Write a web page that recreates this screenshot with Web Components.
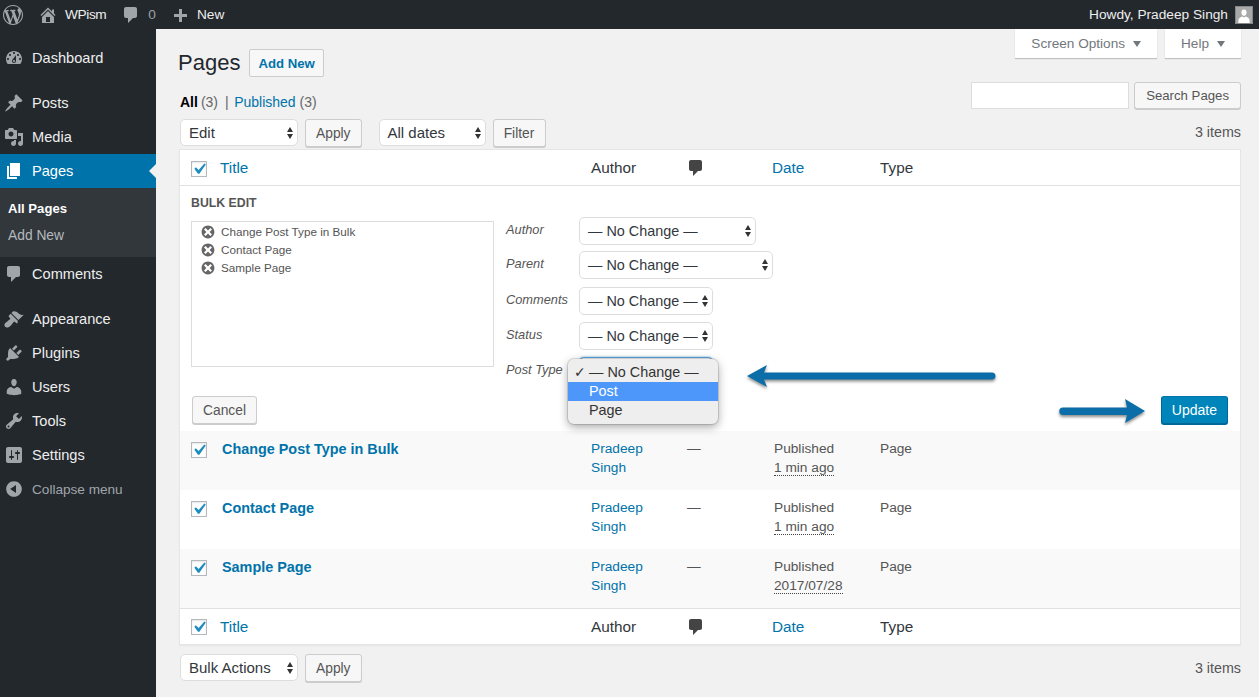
<!DOCTYPE html>
<html lang="en"><head><meta charset="utf-8"><title>Pages</title>
<style>
html,body{margin:0;padding:0;background:#f1f1f1;}
body{font-family:"Liberation Sans",Arial,sans-serif;font-size:14px;color:#444;}
</style></head><body>
<wp-app>
  <wp-adminbar slot="bar"></wp-adminbar>
  <wp-sidebar slot="side"></wp-sidebar>
  <wp-main></wp-main>
  <wp-arrow slot="over" dir="left"></wp-arrow>
  <wp-arrow slot="over" dir="right"></wp-arrow>
</wp-app>
<script>
const ICONS={
wp:'M20 10c0-5.51-4.49-10-10-10C4.48 0 0 4.49 0 10c0 5.52 4.48 10 10 10 5.51 0 10-4.48 10-10zM7.78 15.37L4.37 6.22c.55-.02 1.17-.08 1.17-.08.5-.06.44-1.13-.06-1.11 0 0-1.45.11-2.37.11-.18 0-.37 0-.58-.01C4.12 2.69 6.87 1.11 10 1.11c2.33 0 4.45.87 6.05 2.34-.68-.11-1.65.39-1.65 1.58 0 .74.45 1.36.9 2.1.35.61.55 1.36.55 2.46 0 1.49-1.4 5-1.4 5l-3.03-8.37c.54-.02.82-.17.82-.17.5-.05.44-1.25-.06-1.22 0 0-1.44.12-2.38.12-.87 0-2.33-.12-2.33-.12-.5-.03-.56 1.2-.06 1.22l.92.08 1.26 3.41zM17.41 10c.24-.64.74-1.87.43-4.25.7 1.29 1.05 2.71 1.05 4.25 0 3.29-1.73 6.24-4.4 7.78.97-2.59 1.94-5.2 2.92-7.78zM6.1 18.09C3.12 16.65 1.11 13.53 1.11 10c0-1.3.23-2.48.72-3.59C3.25 10.3 4.67 14.2 6.1 18.09zm4.03-6.63l2.58 6.98c-.86.29-1.76.45-2.71.45-.79 0-1.57-.11-2.29-.33.81-2.38 1.62-4.74 2.42-7.1z',
home:'M16 8.5l1.53 1.53-1.06 1.06L10 4.62l-6.47 6.47-1.06-1.06L10 2.5l4 4v-2h2v4zm-6-2.46l6 5.99V18H4v-5.97zM12 17v-5H8v5h4z',
comment:'M5 2h9c1.1 0 2 .9 2 2v7c0 1.1-.9 2-2 2h-2l-5 5v-5H5c-1.1 0-2-.9-2-2V4c0-1.1.9-2 2-2z',
plus:'M17 7v3h-5v5H9v-5H4V7h5V2h3v5h5z',
dashboard:'M3.76 16h12.48c1.1-1.37 1.76-3.11 1.76-5 0-4.42-3.58-8-8-8s-8 3.58-8 8c0 1.89.66 3.63 1.76 5zM10 4c.55 0 1 .45 1 1s-.45 1-1 1-1-.45-1-1 .45-1 1-1zM6 6c.55 0 1 .45 1 1s-.45 1-1 1-1-.45-1-1 .45-1 1-1zm8 0c.55 0 1 .45 1 1s-.45 1-1 1-1-.45-1-1 .45-1 1-1zm-5.37 5.55L12 7v6c0 1.1-.9 2-2 2s-2-.9-2-2c0-.57.24-1.08.63-1.45zM4 10c.55 0 1 .45 1 1s-.45 1-1 1-1-.45-1-1 .45-1 1-1zm12 0c.55 0 1 .45 1 1s-.45 1-1 1-1-.45-1-1 .45-1 1-1zm-5 3c0-.55-.45-1-1-1s-1 .45-1 1 .45 1 1 1 1-.45 1-1z',
post:'M10.44 3.02l1.82-1.82 6.36 6.35-1.83 1.82c-1.05-.68-2.48-.57-3.41.36l-.75.75c-.92.93-1.04 2.35-.35 3.41l-1.83 1.82-2.41-2.41-2.8 2.79c-.42.42-3.38 2.71-3.8 2.29s1.86-3.39 2.28-3.81l2.79-2.79L4.1 9.36l1.83-1.82c1.05.69 2.48.57 3.4-.36l.75-.75c.93-.92 1.05-2.35.36-3.41z',
media:'M13 11V4c0-.55-.45-1-1-1h-1.67L9 1H5L3.67 3H2c-.55 0-1 .45-1 1v7c0 .55.45 1 1 1h10c.55 0 1-.45 1-1zM7 4.5c1.38 0 2.5 1.12 2.5 2.5S8.38 9.5 7 9.5 4.5 8.38 4.5 7 5.62 4.5 7 4.5zM14 6h5v10.5c0 1.38-1.12 2.5-2.5 2.5S14 17.88 14 16.5s1.12-2.5 2.5-2.5c.17 0 .34.02.5.05V9h-3V6zm-4 8.05V13h2v3.5c0 1.38-1.12 2.5-2.5 2.5S7 17.88 7 16.5 8.12 14 9.5 14c.17 0 .34.02.5.05z',
pages:'M6 15V2h10v13H6zm-1 1h8v2H3V5h2v11z',
appearance:'M14.48 11.06L7.41 3.99l1.5-1.5c.5-.56 2.3-.47 3.51.32 1.21.8 1.43 1.28 2.91 2.1 1.18.64 2.45 1.26 4.45.85zm-.71.71L6.7 4.7 4.93 6.47c-.39.39-.39 1.02 0 1.41l1.06 1.06c.39.39.39 1.03 0 1.42-.6.6-1.43 1.11-2.21 1.69-.35.26-.7.53-1.01.84C1.43 13.23.4 14.85.4 16.08c0 1.23 1.28 2.52 2.52 2.52 1.23 0 2.85-1.03 4.19-2.37.31-.31.58-.66.84-1.01.58-.78 1.09-1.61 1.69-2.21.39-.39 1.03-.39 1.42 0l1.06 1.06c.39.39 1.02.39 1.41 0z',
plugins:'M13.11 4.36L9.87 7.6 8 5.73l3.24-3.24c.35-.34 1.05-.2 1.56.32.52.51.66 1.21.31 1.55zm-8 1.77l.91-1.12 9.01 9.01-1.19.84c-.71.71-2.63 1.16-3.82 1.16H6.14L4.9 17.26c-.59.59-1.54.59-2.12 0-.59-.58-.59-1.53 0-2.12l1.24-1.24v-3.88c0-1.13.4-3.19 1.09-3.89zm7.26 3.97l3.24-3.24c.34-.35 1.04-.21 1.55.31.52.51.66 1.21.31 1.55l-3.24 3.25z',
users:'M10 9.25c-2.27 0-2.73-3.44-2.73-3.44C7 4.02 7.82 2 9.97 2c2.16 0 2.98 2.02 2.71 3.81 0 0-.41 3.44-2.68 3.44zm0 2.57L12.72 10c2.39 0 4.52 2.33 4.52 4.53v2.49s-3.65 1.13-7.24 1.13c-3.65 0-7.24-1.13-7.24-1.13v-2.49c0-2.25 1.94-4.48 4.47-4.48z',
tools:'M16.68 9.77c-1.34 1.34-3.3 1.67-4.95.99l-5.41 6.52c-.99.99-2.59.99-3.58 0s-.99-2.59 0-3.57l6.52-5.42c-.68-1.65-.35-3.61.99-4.95 1.28-1.28 3.12-1.62 4.72-1.06l-2.89 2.89 2.82 2.82 2.86-2.87c.53 1.58.18 3.39-1.08 4.65zM3.81 16.21c.4.39 1.04.39 1.43 0 .4-.4.4-1.04 0-1.43-.39-.4-1.03-.4-1.43 0-.39.39-.39 1.03 0 1.43z',
settings:'M18 16V4c0-1.1-.9-2-2-2H4c-1.1 0-2 .9-2 2v12c0 1.1.9 2 2 2h12c1.1 0 2-.9 2-2zM8 11h1c.55 0 1 .45 1 1s-.45 1-1 1H8v1.5c0 .28-.22.5-.5.5s-.5-.22-.5-.5V13H6c-.55 0-1-.45-1-1s.45-1 1-1h1V5.5c0-.28.22-.5.5-.5s.5.22.5.5V11zm5-2h-1c-.55 0-1-.45-1-1s.45-1 1-1h1V5.5c0-.28.22-.5.5-.5s.5.22.5.5V7h1c.55 0 1 .45 1 1s-.45 1-1 1h-1v5.500c0 .28-.22.5-.5.5s-.5-.22-.5-.5V9z',
collapse:'M10 2.16c4.33 0 7.84 3.51 7.84 7.84s-3.51 7.84-7.84 7.84S2.16 14.33 2.16 10 5.71 2.16 10 2.16zm2 11.72V6.12L6.18 9.97z',
dismiss:'M10 2c4.42 0 8 3.58 8 8s-3.58 8-8 8-8-3.58-8-8 3.58-8 8-8zm5 11l-3-3 3-3-2-2-3 3-3-3-2 2 3 3-3 3 2 2 3-3 3 3z',
yes:'M14.83 4.89l1.34.94-5.81 8.38H9.02L5.78 9.67l1.34-1.25 2.57 2.4z',
user:'M10 11c-2.500 0-3.200-3.600-3.200-3.600C6.500 5.200 7.600 3 10 3s3.500 2.200 3.200 4.400c0 0-.7 3.600-3.200 3.600zM3 20v-3.500c0-2.500 3-3.500 5-4.500l2 1 2-1c2 1 5 2 5 4.500V20z'
};
function el(name,css,html,init){
  customElements.define(name,class extends HTMLElement{
    connectedCallback(){
      if(this.shadowRoot)return;
      const r=this.attachShadow({mode:'open'});
      const h=typeof html==='function'?html(this):html;
      r.innerHTML='<style>'+css+'</style>'+h;
      if(init)init(this,r);
    }
  });
}
el('wp-icon',':host{display:inline-flex;width:var(--s,20px);height:var(--s,20px);flex:none}svg{width:100%;height:100%;fill:currentColor;display:block}',
  t=>`<svg viewBox="0 0 20 20"><path d="${ICONS[t.getAttribute('name')]}"/></svg>`);

el('wp-app',`:host{display:grid;grid-template-columns:156px 1fr;grid-template-rows:29px 1fr;width:1259px;height:697px;overflow:hidden;position:relative;background:#f1f1f1;font-family:"Liberation Sans",Arial,sans-serif}
  ::slotted([slot=bar]){grid-column:1/3}`,
  `<slot name="bar"></slot><slot name="side"></slot><slot></slot><slot name="over"></slot>`);

el('wp-arrow',`:host{position:absolute;display:block}
  :host([dir=left]){left:745px;top:362px;width:254px;height:30px}
  :host([dir=right]){left:1057px;top:397px;width:92px;height:30px}
  svg{width:100%;height:100%;display:block;overflow:visible;filter:drop-shadow(0 2px 1.5px rgba(0,0,0,.45))}`,
  t=>t.getAttribute('dir')==='left'
   ?`<svg viewBox="0 0 254 30"><path fill="#0b6ea8" d="M2 14 L22 3 L19 10.500 H247 a3.500 3.500 0 0 1 0 7 H19 L22 25 Z"/></svg>`
   :`<svg viewBox="0 0 92 30"><path fill="#0b6ea8" d="M88 14 L68 2 L70 10.500 H6 a3.500 3.500 0 0 0 0 7.500 H70 L68 26 Z"/></svg>`);

el('wp-adminbar',`:host{display:flex;align-items:center;background:#23282d;color:#eee;height:29px;font-size:13.7px;overflow:hidden}
  .i{color:#a0a5aa;display:flex}
  .l{display:flex;align-items:center}
  .r{margin-left:auto;display:flex;align-items:center;padding-right:6px;gap:7px}
  .n{color:#9ca1a6}
  .av{width:18px;height:18px;box-sizing:border-box;background:#a9a9a9;border:1px solid #888;color:#fff;display:flex;overflow:hidden;--s:16px}`,
  `<div class="l" style="margin-left:3px"><wp-icon class="i" name="wp" style="--s:20px"></wp-icon></div>
   <div class="l" style="margin-left:15px"><wp-icon class="i" name="home" style="--s:20px"></wp-icon></div>
   <div class="l" style="margin-left:7px;letter-spacing:-.4px">WPism</div>
   <div class="l" style="margin-left:15px"><wp-icon class="i" name="comment" style="--s:20px"></wp-icon></div>
   <div class="l n" style="margin-left:7px">0</div>
   <div class="l" style="margin-left:14px;margin-top:4px"><wp-icon class="i" name="plus" style="--s:20px"></wp-icon></div>
   <div class="l" style="margin-left:7px">New</div>
   <div class="r"><span>Howdy, Pradeep Singh</span><span class="av"><wp-icon name="user"></wp-icon></span></div>`);

el('wp-menu-item',`:host{display:flex;align-items:center;height:34px;color:#eee;font-size:14.6px;position:relative;--s:20px}
  :host([current]){background:#0073aa;color:#fff}
  :host([current])::after{content:"";position:absolute;right:0;top:10px;border:7px solid transparent;border-right-color:#f1f1f1;border-left:0}
  :host([muted]){color:#a0a5aa;font-size:13.6px}
  .ic{width:32px;display:flex;padding-left:4px;box-sizing:border-box;color:#a0a5aa}
  :host([current]) .ic{color:#fff}`,
  t=>`<span class="ic"><wp-icon name="${t.getAttribute('icon')}"></wp-icon></span><slot></slot>`);

el('wp-submenu',`:host{display:flex;flex-direction:column;background:#32373c;height:69px;box-sizing:border-box;padding:7px 0 0 8px;font-size:13.8px;color:#b4b9be}
  ::slotted(*){display:block;height:27px;line-height:27px}
  ::slotted(b){color:#fff;font-size:13.1px}`,`<slot></slot>`);

el('wp-sidebar',`:host{display:flex;flex-direction:column;background:#23282d;padding-top:12px}
  .gap{height:11px;flex:none}`,
  `<wp-menu-item icon="dashboard">Dashboard</wp-menu-item><div class="gap"></div>
   <wp-menu-item icon="post">Posts</wp-menu-item>
   <wp-menu-item icon="media">Media</wp-menu-item>
   <wp-menu-item icon="pages" current>Pages</wp-menu-item>
   <wp-submenu><b>All Pages</b><span>Add New</span></wp-submenu>
   <wp-menu-item icon="comment">Comments</wp-menu-item><div class="gap"></div>
   <wp-menu-item icon="appearance">Appearance</wp-menu-item>
   <wp-menu-item icon="plugins">Plugins</wp-menu-item>
   <wp-menu-item icon="users">Users</wp-menu-item>
   <wp-menu-item icon="tools">Tools</wp-menu-item>
   <wp-menu-item icon="settings">Settings</wp-menu-item>
   <wp-menu-item icon="collapse" muted>Collapse menu</wp-menu-item>`);

el('wp-btn',`:host{display:inline-flex;align-items:center;justify-content:center;height:28px;box-sizing:border-box;padding:0 10px;border:1px solid #ccc;border-radius:3px;background:#f7f7f7;box-shadow:0 1px 0 #ccc;color:#555;font-size:13.8px;white-space:nowrap;flex:none}
  :host([primary]){background:#0085ba;border-color:#0073aa #006799 #006799;box-shadow:0 1px 0 #006799;color:#fff;font-size:14px}
  :host([addnew]){background:#f7f7f7;color:#0073aa;font-weight:700;border-color:#ccc;box-shadow:none;border-radius:2px;font-size:13.2px;padding:0 8px}`,`<slot></slot>`);

el('wp-select',`:host{display:inline-flex;align-items:center;height:27px;box-sizing:border-box;padding:0 4px 0 8px;border:1px solid #ddd;border-radius:5px;background:#fff;color:#32373c;font-size:15px;position:relative;flex:none;white-space:nowrap}
  .a{margin-left:auto;display:flex;flex-direction:column;gap:2px;padding-left:4px}
  .a i{display:block;width:0;height:0;border:3.500px solid transparent;border-top:0;border-bottom:5px solid #333}
  .a i+i{border-bottom:0;border-top:5px solid #333}`,
  `<slot></slot><span class="a"><i></i><i></i></span>`);

el('wp-check',`:host{display:inline-flex;width:16px;height:16px;box-sizing:border-box;border:1px solid #b4b9be;background:#fff;color:#1e8cbe;box-shadow:inset 0 1px 2px rgba(0,0,0,.1);flex:none;--s:22px;align-items:center;justify-content:center;overflow:visible}
  wp-icon{margin:-4px}`,`<wp-icon name="yes"></wp-icon>`);

el('wp-tablenav',`:host{display:flex;align-items:flex-start;height:28px}
  .c{margin-left:auto;font-size:14.3px;color:#555;line-height:27px;padding-top:var(--cp,0)}`,
  t=>`<slot></slot><span class="c">3 items</span>`);

el('wp-screen-tabs',`:host{display:flex;justify-content:flex-end;gap:8px;height:29px}
  ::slotted(*){display:flex;align-items:center;gap:8px;height:29px;box-sizing:border-box;background:#fff;box-shadow:0 1px 1px rgba(0,0,0,.2);padding:0 16px;color:#72777c;font-size:13.6px}`,`<slot></slot>`);

el('wp-caret',`:host{display:inline-block;width:0;height:0;border:4.500px solid transparent;border-bottom:0;border-top:6px solid #72777c}`,``);

el('wp-head-row',`:host{display:grid;grid-template-columns:40px 371px 98px 83px 108px 1fr;align-items:center;height:36px;background:#fff;font-size:15.300px;color:#32373c;box-sizing:border-box}
  :host([top]){border-bottom:1px solid #e1e1e1;padding-top:1px}
  :host([bottom]){border-top:1px solid #e1e1e1}
  .ck{padding-left:11px;display:flex}
  :host([top]) .ck{padding-top:1px}
  .a{color:#0073aa}
  .ci{color:#444;--s:20px;margin-left:-3px;display:flex}`,
  `<span class="ck"><wp-check></wp-check></span><span class="a">Title</span><span>Author</span><span class="ci"><wp-icon name="comment"></wp-icon></span><span class="a">Date</span><span>Type</span>`);

el('wp-page-row',`:host{display:grid;grid-template-columns:40px 371px 98px 83px 108px 1fr;height:59px;box-sizing:border-box;padding-top:8px;font-size:13.7px;line-height:19px;color:#555;background:#fff}
  :host([alt]){background:#f9f9f9}
  .ck{padding:3px 0 0 11px;display:flex;align-items:flex-start}
  .t{color:#0073aa;font-weight:700;font-size:14.4px;padding:1px 0 0 2px}
  .a{color:#0073aa;width:60px}
  .d{margin-left:-2px}
  .p{padding-left:2px}
  abbr{text-decoration:none;border-bottom:1px dotted #444;color:#555}`,
  t=>`<span class="ck"><wp-check></wp-check></span><span class="t">${t.getAttribute('name')}</span><span class="a">Pradeep Singh</span><span class="d">—</span><span class="p">Published<br><abbr>${t.getAttribute('when')}</abbr></span><span>Page</span>`);

el('wp-field',`:host{display:grid;grid-template-columns:73px auto;justify-content:start;align-items:flex-start}
  .l{font-style:italic;font-size:12.8px;color:#555;line-height:20px;padding-top:3px}`,
  t=>`<span class="l">${t.getAttribute('label')}</span><span style="display:flex"><slot></slot></span>`);

el('wp-titles',`:host{display:flex;flex-direction:column;box-sizing:border-box;height:146px;border:1px solid #ddd;background:#fff;padding:1px 0 0 8px;color:#555;font-size:11.7px}
  .r{display:flex;align-items:center;height:18px;gap:5px;color:#666;}
  .r wp-icon{--s:16px}
  .r span{color:#555;margin-top:-2px}`,
  `<div class="r"><wp-icon name="dismiss"></wp-icon><span>Change Post Type in Bulk</span></div>
   <div class="r"><wp-icon name="dismiss"></wp-icon><span>Contact Page</span></div>
   <div class="r"><wp-icon name="dismiss"></wp-icon><span>Sample Page</span></div>`);

el('wp-popup',`:host{position:absolute;left:388px;top:173px;width:150px;height:65px;box-sizing:border-box;background:#eeeeee;border-radius:6px;box-shadow:0 0 0 1px rgba(0,0,0,.12),0 3px 10px rgba(0,0,0,.35);font-size:14.4px;color:#333;padding-top:4px;overflow:hidden;z-index:2}
  .o{height:19px;line-height:18px;padding-left:21px;position:relative}
  .s{background:#4d97fb;color:#fff}
  .c{position:absolute;left:6px;top:0;font-size:14px;font-family:"DejaVu Sans",sans-serif}`,
  `<div class="o"><span class="c">✓</span>— No Change —</div><div class="o s">Post</div><div class="o">Page</div>`);

el('wp-bulk-edit',`:host{display:block;position:relative;background:#fff;height:245px;box-sizing:border-box;padding:0 12px 0 11px;color:#444}
  .g{display:grid;grid-template-columns:303px 1fr;column-gap:12px;height:199px}
  h4{margin:0;padding-top:10px;font-size:12.300px;line-height:15px;font-weight:700;color:#555;height:26px;box-sizing:border-box;margin-bottom:9px}
  .rt{padding-top:31px;display:flex;flex-direction:column}
  .b{display:flex;justify-content:space-between;margin-top:11px;padding-left:1px}
  wp-select{font-size:14.4px;height:28px}`,
  `<div class="g"><div><h4>BULK EDIT</h4><wp-titles></wp-titles></div>
    <div class="rt">
     <wp-field label="Author"><wp-select style="width:177px">— No Change —</wp-select></wp-field>
     <wp-field label="Parent" style="margin-top:6px"><wp-select style="width:194px">— No Change —</wp-select></wp-field>
     <wp-field label="Comments" style="margin-top:8px"><wp-select style="width:134px">— No Change —</wp-select></wp-field>
     <wp-field label="Status" style="margin-top:7px"><wp-select style="width:134px">— No Change —</wp-select></wp-field>
     <wp-field label="Post Type" style="margin-top:7px"><wp-select style="width:134px;border-color:#5b9dd9;box-shadow:0 0 2px rgba(30,140,190,.8)">— No Change —</wp-select></wp-field>
    </div></div>
   <div class="b"><wp-btn>Cancel</wp-btn><wp-btn primary>Update</wp-btn></div>
   <wp-popup></wp-popup>`);

el('wp-table',`:host{display:block;background:#fff;border:1px solid #e5e5e5;box-shadow:0 1px 1px rgba(0,0,0,.04)}`,`<slot></slot>`);

el('wp-main',`:host{display:block;padding:0 18px 0 23px;min-width:0}
  .top{display:grid;grid-template-columns:1fr auto;margin-top:-9px}
  h1{margin:0 0 0 -1px;font-weight:400;font-size:22px;color:#23282d;line-height:28px}
  .tr{display:flex;align-items:center;gap:9px}
  .sub{margin:15px 0 0 1px;height:20px;line-height:20px;font-size:14px;color:#666;display:flex}
  .sub b{color:#000;margin-right:3px}.sub a{color:#0073aa}
  .sub i{font-style:normal;margin:0 5.500px 0 7px}
  .se{display:flex;gap:5px;padding-top:33px;align-items:flex-start}
  .inp{width:158px;height:27px;box-sizing:border-box;background:#fff;border:1px solid #ddd}
  wp-table{margin-top:2px}
  .nav1{margin-top:7px}
  .bn{margin-top:9px;--cp:1px}
  .sb{height:27px;font-size:13.2px;padding:0 11px}
  .fs{margin-left:1px}
  `,
  `<wp-screen-tabs><div>Screen Options <wp-caret></wp-caret></div><div>Help <wp-caret></wp-caret></div></wp-screen-tabs>
   <div class="top"><div>
      <div class="tr"><h1>Pages</h1><wp-btn addnew>Add New</wp-btn></div>
      <div class="sub"><b>All</b> (3)<i>|</i><a>Published</a>&nbsp;(3)</div>
     </div>
     <div class="se"><div class="inp"></div><wp-btn class="sb">Search Pages</wp-btn></div>
   </div>
   <wp-tablenav class="nav1"><wp-select class="fs" style="width:118px">Edit</wp-select><wp-btn style="margin-left:7px">Apply</wp-btn><wp-select style="width:107px;margin-left:17px">All dates</wp-select><wp-btn style="margin-left:7px;width:53px">Filter</wp-btn></wp-tablenav>
   <wp-table>
     <wp-head-row top></wp-head-row>
     <wp-bulk-edit></wp-bulk-edit>
     <wp-page-row alt name="Change Post Type in Bulk" when="1 min ago"></wp-page-row>
     <wp-page-row name="Contact Page" when="1 min ago"></wp-page-row>
     <wp-page-row alt name="Sample Page" when="2017/07/28"></wp-page-row>
     <wp-head-row bottom></wp-head-row>
   </wp-table>
   <wp-tablenav class="bn"><wp-select class="fs" style="width:118px">Bulk Actions</wp-select><wp-btn style="margin-left:7px">Apply</wp-btn></wp-tablenav>`);
</script>
</body></html>
